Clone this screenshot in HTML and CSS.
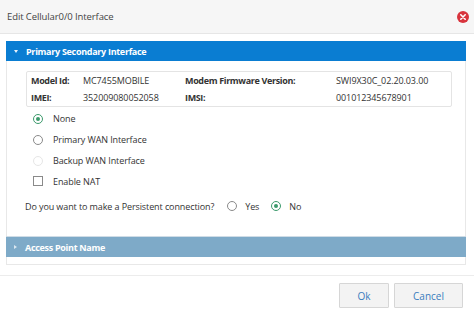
FILE: index.html
```html
<!DOCTYPE html>
<html>
<head>
<meta charset="utf-8">
<link rel="stylesheet" href="styles.css">
</head>
<body>
<div class="dialog">
  <div class="titlebar">
    <span class="title">Edit Cellular0/0 Interface</span>
    <svg class="close" width="12" height="12" viewBox="0 0 12 12"><circle cx="6" cy="6" r="6" fill="#d8343d"/><path d="M3.8 3.8 L8.2 8.2 M8.2 3.8 L3.8 8.2" stroke="#fff" stroke-width="1.6" stroke-linecap="round"/></svg>
  </div>
  <div class="content">
    <div class="accordion">
      <div class="acc-head active"><span class="tri down"></span>Primary Secondary Interface</div>
      <div class="acc-panel">
        <div class="info">
          <span class="lbl">Model Id:</span><span class="val">MC7455MOBILE</span><span class="lbl">Modem Firmware Version:</span><span class="val">SWI9X30C_02.20.03.00</span>
          <span class="lbl">IMEI:</span><span class="val">352009080052058</span><span class="lbl">IMSI:</span><span class="val">001012345678901</span>
        </div>
        <div class="options">
          <div class="opt"><span class="radio checked"></span>None</div>
          <div class="opt"><span class="radio"></span>Primary WAN Interface</div>
          <div class="opt"><span class="radio disabled"></span>Backup WAN Interface</div>
          <div class="opt"><span class="check"></span>Enable NAT</div>
        </div>
        <div class="persist">
          <span class="q">Do you want to make a Persistent connection?</span>
          <span class="opt-inline"><span class="radio"></span>Yes</span>
          <span class="opt-inline"><span class="radio checked"></span>No</span>
        </div>
      </div>
      <div class="acc-head closed"><span class="tri right"></span>Access Point Name</div>
    </div>
  </div>
  <div class="footer">
    <button class="btn ok">Ok</button>
    <button class="btn cancel">Cancel</button>
  </div>
</div>
</body>
</html>
```
FILE: styles.css
```css
html, body {
  margin: 0;
  padding: 0;
  background: #fff;
}
body {
  width: 474px;
  height: 314px;
  overflow: hidden;
  font-family: "Open Sans", "Noto Sans", sans-serif;
  font-size: 9px;
  letter-spacing: -0.1px;
  color: #333;
}
.dialog {
  display: flex;
  flex-direction: column;
  height: 314px;
}
.titlebar {
  height: 33px;
  background: #f6f6f6;
  border-bottom: 1px solid #e6e6e6;
  display: flex;
  align-items: center;
  justify-content: space-between;
  padding: 0 5px 0 7px;
}
.title {
  font-size: 9.5px;
  color: #444;
}
.close {
  display: block;
}
.content {
  padding: 7px 8px 0 6px;
}
.accordion {
  border: 1px solid #e8e8e8;
  border-top: none;
  padding-bottom: 7px;
}
.acc-head {
  height: 20px;
  display: flex;
  align-items: center;
  color: #fff;
  font-weight: 700;
  font-size: 9px;
  letter-spacing: -0.3px;
  padding-left: 8px;
  margin: 0 -1px;
}
.acc-head.active {
  background: #0a7dd2;
}
.acc-head.closed {
  background: #7eaac8;
  border-top: 1px solid #cfdce6;
}
.tri {
  width: 0;
  height: 0;
  margin-right: 8px;
}
.tri.down {
  border-left: 2.5px solid transparent;
  border-right: 2.5px solid transparent;
  border-top: 3px solid #e8f2fb;
}
.tri.right {
  border-top: 2.5px solid transparent;
  border-bottom: 2.5px solid transparent;
  border-left: 3px solid #dbe7f0;
}
.acc-panel {
  padding: 10px 13px 0 19px;
  height: 165px;
}
.info {
  border: 1px solid #e4e4e4;
  border-radius: 2px;
  display: grid;
  grid-template-columns: 52px 102px 151px 1fr;
  grid-auto-rows: 17px;
  align-items: center;
  padding: 0 0 0 4px;
}
.lbl {
  font-weight: 700;
  letter-spacing: -0.35px;
}
.options {
  padding: 1px 0 0 7px;
  display: flex;
  flex-direction: column;
}
.opt {
  height: 21px;
  display: flex;
  align-items: center;
}
.opt:last-child {
  height: 20px;
}
.radio {
  display: inline-block;
  box-sizing: border-box;
  width: 10px;
  height: 10px;
  border: 1px solid #8a8a8a;
  border-radius: 50%;
  margin-right: 10px;
  position: relative;
  flex: none;
}
.radio.checked {
  border-color: #3c9a6c;
}
.radio.checked::after {
  content: "";
  position: absolute;
  left: 2px;
  top: 2px;
  width: 4px;
  height: 4px;
  border-radius: 50%;
  background: #3c9a6c;
}
.radio.disabled {
  border-color: #e6e6e6;
}
.check {
  display: inline-block;
  box-sizing: border-box;
  width: 10px;
  height: 10px;
  border: 1px solid #8a8a8a;
  margin-right: 10px;
  flex: none;
}
.persist {
  display: flex;
  align-items: center;
  height: 20px;
  margin-top: 5px;
  margin-left: -1px;
}
.q {
  margin-right: 13px;
}
.opt-inline {
  display: inline-flex;
  align-items: center;
  margin-right: 12px;
}
.opt-inline .radio {
  margin-right: 8px;
}
.footer {
  margin-top: 10px;
  border-top: 1px solid #ececec;
  display: flex;
  justify-content: flex-end;
  padding: 7px 11px 0 0;
  gap: 5px;
}
.btn {
  font-family: "Open Sans", "Noto Sans", sans-serif;
  font-size: 10px;
  color: #3a7cbd;
  background: #f3f3f3;
  border: 1px solid #d6d6d6;
  border-radius: 1px;
  height: 25px;
  padding: 0;
  margin: 0;
}
.btn.ok {
  width: 50px;
}
.btn.cancel {
  width: 69px;
}
```
